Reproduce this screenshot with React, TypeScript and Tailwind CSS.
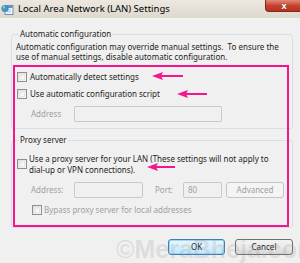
import React from 'react';

function Checkbox() {
  return (
    <span className="block w-[10px] h-[10px] shrink-0 border border-[#8f8f8f] bg-gradient-to-br from-[#dcdcdc] to-[#fbfbfb] p-[1px]">
      <span className="block w-full h-full border border-[#e6e6e6] bg-gradient-to-br from-[#e9e9e9] to-[#ffffff]" />
    </span>
  );
}

function Arrow({ x, y, w }: { x: number; y: number; w: number }) {
  return (
    <svg
      className="absolute"
      style={{ left: x, top: y - 5 }}
      width={w}
      height={10}
      viewBox={`0 0 ${w} 10`}
    >
      <line x1={8} y1={5} x2={w} y2={5} stroke="#f5168d" strokeWidth={2} />
      <polygon points="0,5 11,1 9,5 11,9" fill="#f5168d" />
    </svg>
  );
}

function TitleBar() {
  return (
    <div className="relative h-[19px] bg-gradient-to-b from-[#ece8e0] to-[#ded9cf] border-b border-[#f6f4f0] flex items-center">
      <svg className="ml-[1px] mt-[1px]" width="13" height="13" viewBox="0 0 13 13">
        <rect x="4" y="2.5" width="8" height="9" fill="#f4f8fc" stroke="#6b8fb5" strokeWidth="1" />
        <rect x="4.5" y="3" width="7" height="2" fill="#5f93cc" />
        <rect x="6" y="6.5" width="4" height="0.8" fill="#9ab2cc" />
        <rect x="6" y="8.5" width="4" height="0.8" fill="#9ab2cc" />
        <circle cx="4" cy="5.5" r="3.6" fill="#3d8fd6" />
        <path d="M1.5 4.5 Q3 3 4.5 4.5 Q5 6.5 3 7.5 Q1.5 7 1.5 4.5Z" fill="#5bb84a" />
        <circle cx="3" cy="4" r="1.1" fill="#bfe3ff" opacity="0.7" />
      </svg>
      <span className="ml-[4px] text-[9.5px] text-black leading-none">Local Area Network (LAN) Settings</span>
      <div className="absolute right-0 top-0 w-[35px] h-[12px] rounded-bl-[4px] border border-t-0 border-r-0 border-[#7a2a1f] bg-gradient-to-b from-[#e08a78] via-[#c8432f] to-[#b8301c] flex items-center justify-center">
        <span className="text-white font-bold text-[9px] leading-[10px] ml-[2px] [text-shadow:0_0_1px_#5a1208]">x</span>
      </div>
    </div>
  );
}

export default function App() {
  return (
    <div className="relative w-[300px] h-[263px] overflow-hidden bg-[#f0f0f0] font-['Noto_Sans',sans-serif] text-[8px] text-[#1e1e1e]">
      <TitleBar />

      <div className="pl-[11px] pr-[7px] pt-[10px]">
        <fieldset className="border border-[#d5dfe5] rounded-[3px] pl-[4px] pb-[6px]">
          <legend className="ml-[3px] px-[1px] leading-[10px]">Automatic configuration</legend>
          <p className="mt-[3px] leading-[10px] whitespace-nowrap">
            Automatic configuration may override manual settings.&nbsp; To ensure the
            <br />
            use of manual settings, disable automatic configuration.
          </p>
          <div className="mt-[9px] ml-[1px] h-[12px] flex items-center gap-[3px]">
            <Checkbox />
            <span className="leading-none">Automatically detect settings</span>
          </div>
          <div className="mt-[5px] ml-[1px] h-[12px] flex items-center gap-[3px]">
            <Checkbox />
            <span className="leading-none">Use automatic configuration script</span>
          </div>
          <div className="mt-[6px] ml-[15px] flex items-center">
            <span className="w-[43px] text-[#a0a0a0]">Address</span>
            <div className="w-[148px] h-[16px] border border-[#c9c9c9] rounded-[2px] bg-[#f0f0f0]" />
          </div>
        </fieldset>

        <fieldset className="mt-[6px] border border-[#d5dfe5] rounded-[3px] pl-[4px] pb-[11px]">
          <legend className="ml-[3px] px-[1px] leading-[10px]">Proxy server</legend>
          <div className="mt-[8px] ml-[1px] flex items-center gap-[2px]">
            <Checkbox />
            <span className="leading-[11px] whitespace-nowrap">
              Use a proxy server for your LAN (These settings will not apply to
              <br />
              dial-up or VPN connections).
            </span>
          </div>
          <div className="mt-[7px] ml-[15px] flex items-center text-[#a0a0a0]">
            <span className="w-[43px]">Address:</span>
            <div className="w-[69px] h-[16px] border border-[#c9c9c9] rounded-[2px]" />
            <span className="ml-[12px] w-[28px]">Port:</span>
            <div className="w-[39px] h-[16px] border border-[#c9c9c9] rounded-[2px] pl-[4px] flex items-center">80</div>
            <div className="ml-[4px] w-[58px] h-[16px] border border-[#c2c6c9] rounded-[3px] bg-[#f4f4f4] flex items-center justify-center">
              Advanced
            </div>
          </div>
          <div className="mt-[6px] ml-[16px] h-[12px] flex items-center gap-[2px] text-[#a0a0a0]">
            <Checkbox />
            <span className="leading-none">Bypass proxy server for local addresses</span>
          </div>
        </fieldset>

        <div className="mt-[11px] flex justify-end gap-[10px]">
          <button className="w-[57px] h-[16px] rounded-[3px] border border-[#3c7fb1] bg-gradient-to-b from-[#eaf6fd] via-[#d9f0fc] to-[#bee6fd] shadow-[inset_0_0_0_1px_#9fd9f7] text-[8px] leading-none text-[#1e1e1e]">
            OK
          </button>
          <button className="w-[58px] h-[16px] rounded-[3px] border border-[#707070] bg-gradient-to-b from-[#f2f2f2] via-[#ebebeb] to-[#d6d6d6] text-[8px] leading-none text-[#1e1e1e]">
            Cancel
          </button>
        </div>
      </div>

      {/* annotations */}
      <div className="absolute left-[13px] top-[65px] w-[276px] h-[162px] border-2 border-[#f5168d] pointer-events-none" />
      <Arrow x={152} y={76} w={31} />
      <Arrow x={177} y={94} w={30} />
      <Arrow x={147} y={167} w={28} />

      {/* watermark */}
      <div className="absolute left-[116px] top-[237px] whitespace-nowrap font-['Liberation_Sans',sans-serif] font-bold text-[25px] leading-none text-[#8c8c8c]/20 pointer-events-none">
        ©MeraBheja.com
      </div>
    </div>
  );
}
